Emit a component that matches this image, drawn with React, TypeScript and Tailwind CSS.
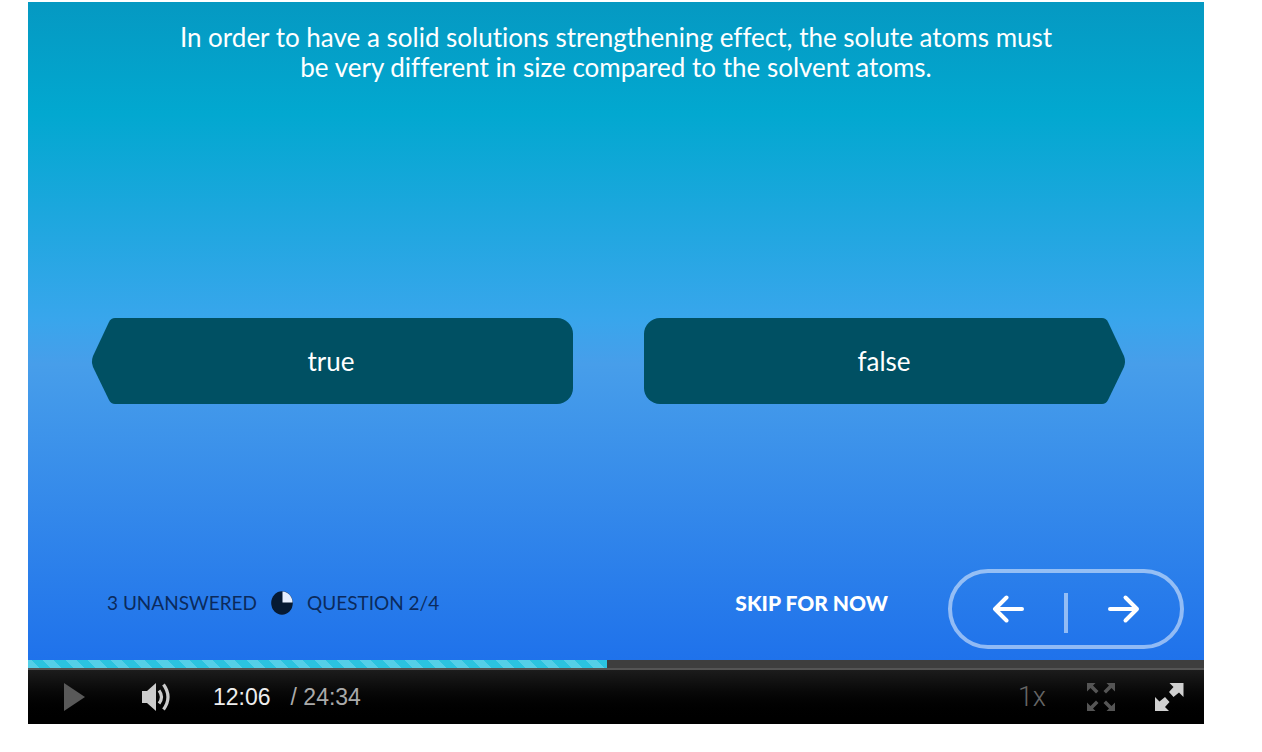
function AnswerCap({ className = "" }: { className?: string }) {
  return (
    <svg className={`block h-[86px] w-[26px] shrink-0 ${className}`} viewBox="0 0 26 86" fill="#005063" aria-hidden="true">
      <path d="M26 0H24Q20 0 18 4L2 38Q0 43.500 2 49L18 82Q20 86 24 86H26Z" />
    </svg>
  );
}

function PieIcon() {
  return (
    <svg className="h-6 w-[22px]" viewBox="0 0 22 24" aria-hidden="true">
      <ellipse cx="11" cy="12" rx="10.800" ry="11.800" fill="#061a33" />
      <path d="M11.500 11.500V0.500C17 0.800 21.400 5.500 21.600 11.500Z" fill="#e6efff" />
    </svg>
  );
}

function ArrowIcon({ className = "" }: { className?: string }) {
  return (
    <svg
      className={`h-8 w-8 ${className}`}
      viewBox="0 0 32 32"
      fill="none"
      stroke="#fff"
      strokeWidth="4"
      strokeLinecap="round"
      strokeLinejoin="round"
      aria-hidden="true"
    >
      <path d="M30 16H3M14.500 4.500L3 16L14.500 27.500" />
    </svg>
  );
}

export default function App() {
  return (
    <main className="bg-white pt-0.5 pr-[58px] pl-7 font-['Lato',sans-serif] [font-variant-ligatures:none]">
      <section className="bg-[linear-gradient(to_bottom,#0599c2_0%,#02a8d0_17%,#38a6ec_48%,#479eea_55%,#1f72eb_100%)] pt-5 pb-[11px] text-white">
        <h1 className="text-center text-[26px] leading-[30px]">
          <span className="block">In order to have a solid solutions strengthening effect, the solute atoms must</span>
          <span className="block">be very different in size compared to the solvent atoms.</span>
        </h1>

        <div className="mt-[236px] grid grid-cols-2 gap-[71px] pr-[78px] pl-[63px] text-[26px]">
          <button type="button" className="flex items-stretch">
            <AnswerCap />
            <span className="flex h-[86px] flex-1 items-center justify-center rounded-r-2xl bg-[#005063] pr-7">true</span>
          </button>
          <button type="button" className="flex items-stretch">
            <span className="flex h-[86px] flex-1 items-center justify-center rounded-l-2xl bg-[#005063] pl-6">false</span>
            <AnswerCap className="-scale-x-100" />
          </button>
        </div>

        <footer className="mt-[165px] flex items-center justify-between pr-5 pl-[79px]">
          <div className="flex items-center gap-3.5 pb-3 text-[19px] text-[#0b2a5c]">
            <span>3 UNANSWERED</span>
            <PieIcon />
            <span>QUESTION 2/4</span>
          </div>
          <div className="flex items-center gap-[60px]">
            <button type="button" className="pb-3 text-[21px] font-black">SKIP FOR NOW</button>
            <nav className="flex h-20 w-[236px] items-center rounded-full border-4 border-white/50" aria-label="Questions">
              <button type="button" aria-label="Previous question" className="flex h-full flex-1 items-center justify-center">
                <ArrowIcon />
              </button>
              <span className="mt-2 h-10 w-1 bg-white/50" />
              <button type="button" aria-label="Next question" className="flex h-full flex-1 items-center justify-center">
                <ArrowIcon className="rotate-180" />
              </button>
            </nav>
          </div>
        </footer>
      </section>

      <section aria-label="Player" className="font-['Liberation_Sans',Arial,sans-serif]">
        <div className="h-2 bg-[#3e3e3e]">
          <div className="h-full w-[49.2%] bg-[repeating-linear-gradient(45deg,#54cfe8_0px,#54cfe8_8px,#2bc3e0_8px,#2bc3e0_16px)]" />
        </div>
        <div className="flex h-14 items-center border-t-2 border-[#555] bg-linear-to-b from-[#1c1c1c] to-black pr-5 pl-9 text-[23px]">
          <button type="button" aria-label="Play">
            <svg className="h-7 w-[21px]" viewBox="0 0 21 28" fill="#595959" aria-hidden="true">
              <path d="M0 0L21 14L0 28Z" />
            </svg>
          </button>
          <button type="button" aria-label="Mute" className="ml-14">
            <svg className="h-7 w-[30px]" viewBox="0 0 30 28" fill="#ccc" aria-hidden="true">
              <path d="M1 8H6L15 0V28L6 20H1Z" />
              <path d="M18 7.500Q23 14 18 20.500M22.500 1.500Q31.500 14 22.500 26.500" fill="none" stroke="#ccc" strokeWidth="3.200" />
            </svg>
          </button>
          <span className="ml-[42px] text-[#eee]">12:06</span>
          <span className="ml-5 text-[#aaa]">/ 24:34</span>
          <button type="button" className="ml-auto font-['Roboto',sans-serif] text-[27px] font-light text-[#666]">1x</button>
          <button type="button" aria-label="Theater mode" className="ml-10">
            <svg className="h-[30px] w-[30px]" viewBox="0 0 30 30" fill="#555" aria-hidden="true">
              <path d="M1 1H9.500L7 3.500L12.500 9L10 11.500L4.500 6L1 9.500Z" />
              <path d="M29 1H20.500L23 3.500L17.500 9L20 11.500L25.500 6L29 9.500Z" />
              <path d="M1 29H9.500L7 26.500L12.500 21L10 18.500L4.500 24L1 20.500Z" />
              <path d="M29 29H20.500L23 26.500L17.500 21L20 18.500L25.500 24L29 20.500Z" />
            </svg>
          </button>
          <button type="button" aria-label="Full screen" className="ml-[38px]">
            <svg className="h-[30px] w-[30px]" viewBox="0 0 30 30" fill="#d0d0d0" aria-hidden="true">
              <path d="M29.500 1H15.500L19.500 5L15 10L19.500 15L25 10.500L29.500 15Z" />
              <path d="M1 29H15L11 25L15.500 20L11 15L5.500 19.500L1 15Z" />
            </svg>
          </button>
        </div>
      </section>
    </main>
  );
}
